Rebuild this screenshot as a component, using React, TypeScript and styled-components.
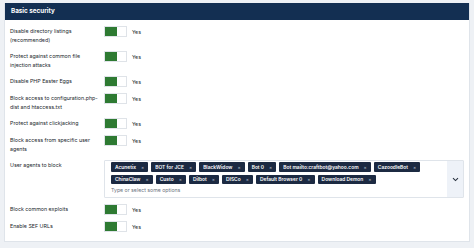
import styled, { createGlobalStyle } from 'styled-components'

const GlobalStyle = createGlobalStyle`
  html, body {
    margin: 0;
    padding: 0;
    background: #eef1f5;
    font-family: 'Inter', 'Liberation Sans', sans-serif;
    -webkit-font-smoothing: antialiased;
  }
`

interface SwitchRow {
  label: string
}

const rowsTop: SwitchRow[] = [
  { label: 'Disable directory listings (recommended)' },
  { label: 'Protect against common file injection attacks' },
  { label: 'Disable PHP Easter Eggs' },
  { label: 'Block access to configuration.php-dist and htaccess.txt' },
  { label: 'Protect against clickjacking' },
  { label: 'Block access from specific user agents' },
]

const rowsBottom: SwitchRow[] = [
  { label: 'Block common exploits' },
  { label: 'Enable SEF URLs' },
]

const agents = [
  'Acunetix',
  'BOT for JCE',
  'BlackWidow',
  'Bot 0',
  'Bot mailto:craftbot@yahoo.com',
  'CazoodleBot',
  'ChinaClaw',
  'Custo',
  'Dilbot',
  'DISCo',
  'Default Browser 0',
  'Download Demon',
]

function Toggle() {
  return (
    <SwitchWrap>
      <Switch>
        <Knob />
      </Switch>
      <SwitchText>Yes</SwitchText>
    </SwitchWrap>
  )
}

export default function App() {
  return (
    <>
      <GlobalStyle />
      <Page>
        <Card>
          <CardHeader>Basic security</CardHeader>
          <CardBody>
            {rowsTop.map((row) => (
              <Row key={row.label}>
                <Label>{row.label}</Label>
                <Toggle />
              </Row>
            ))}
            <Row>
              <Label>User agents to block</Label>
              <Select>
                <SelectInner>
                  <Tags>
                    {agents.map((agent) => (
                      <Tag key={agent}>
                        {agent}
                        <TagClose>×</TagClose>
                      </Tag>
                    ))}
                  </Tags>
                  <Placeholder>Type or select some options</Placeholder>
                </SelectInner>
                <Chevron>
                  <svg width="7" height="5" viewBox="0 0 7 5">
                    <path
                      d="M1 1.2 L3.5 3.6 L6 1.2"
                      fill="none"
                      stroke="#2b3440"
                      strokeWidth="1.1"
                    />
                  </svg>
                </Chevron>
              </Select>
            </Row>
            {rowsBottom.map((row) => (
              <Row key={row.label}>
                <Label>{row.label}</Label>
                <Toggle />
              </Row>
            ))}
          </CardBody>
        </Card>
      </Page>
    </>
  )
}

const Page = styled.div`
  padding: 3px 4px 6px 4px;
`

const Card = styled.div`
  width: 466px;
  height: 239px;
  box-sizing: border-box;
  background: #ffffff;
  border: 1px solid #dfe4ea;
  border-top: none;
  overflow: hidden;
`

const CardHeader = styled.div`
  height: 17px;
  line-height: 17px;
  padding-left: 6px;
  background: #132f52;
  color: #ffffff;
  font-size: 6.3px;
  font-weight: 700;
`

const CardBody = styled.div`
  display: flex;
  flex-direction: column;
  gap: 6px;
  padding: 6px 5px 0 5px;
`

const Row = styled.div`
  display: grid;
  grid-template-columns: 94px 1fr;
  align-items: start;
`

const Label = styled.div`
  padding-top: 1px;
  padding-right: 4px;
  font-size: 5.3px;
  line-height: 9px;
  color: #22272c;
`

const SwitchWrap = styled.div`
  display: flex;
  align-items: center;
  gap: 5px;
`

const Switch = styled.div`
  width: 23px;
  height: 11px;
  box-sizing: border-box;
  border: 1px solid #dfe3e8;
  background: #ffffff;
  display: flex;
`

const Knob = styled.div`
  width: 12px;
  height: 100%;
  background: #2e7a32;
`

const SwitchText = styled.span`
  font-size: 5.2px;
  color: #22272c;
`

const Select = styled.div`
  width: 360px;
  height: 38px;
  box-sizing: border-box;
  border: 1px solid #dfe4ea;
  border-radius: 1px;
  display: flex;
`

const SelectInner = styled.div`
  flex: 1;
  padding: 1px 6px 0 6px;
  display: flex;
  flex-direction: column;
`

const Tags = styled.div`
  display: flex;
  flex-wrap: wrap;
  gap: 3px 3px;
`

const Tag = styled.span`
  display: inline-flex;
  align-items: center;
  height: 9.5px;
  padding: 0 4px;
  background: #1c2a42;
  color: #ffffff;
  font-size: 4.9px;
  font-weight: 600;
  border-radius: 1px;
  white-space: nowrap;
`

const TagClose = styled.span`
  margin-left: 5px;
  color: #a9b3c2;
  font-weight: 400;
`

const Placeholder = styled.div`
  margin-top: 2px;
  font-size: 5.2px;
  line-height: 9px;
  color: #6b7380;
`

const Chevron = styled.div`
  width: 16px;
  background: #eef2f8;
  display: flex;
  align-items: center;
  justify-content: center;
`
